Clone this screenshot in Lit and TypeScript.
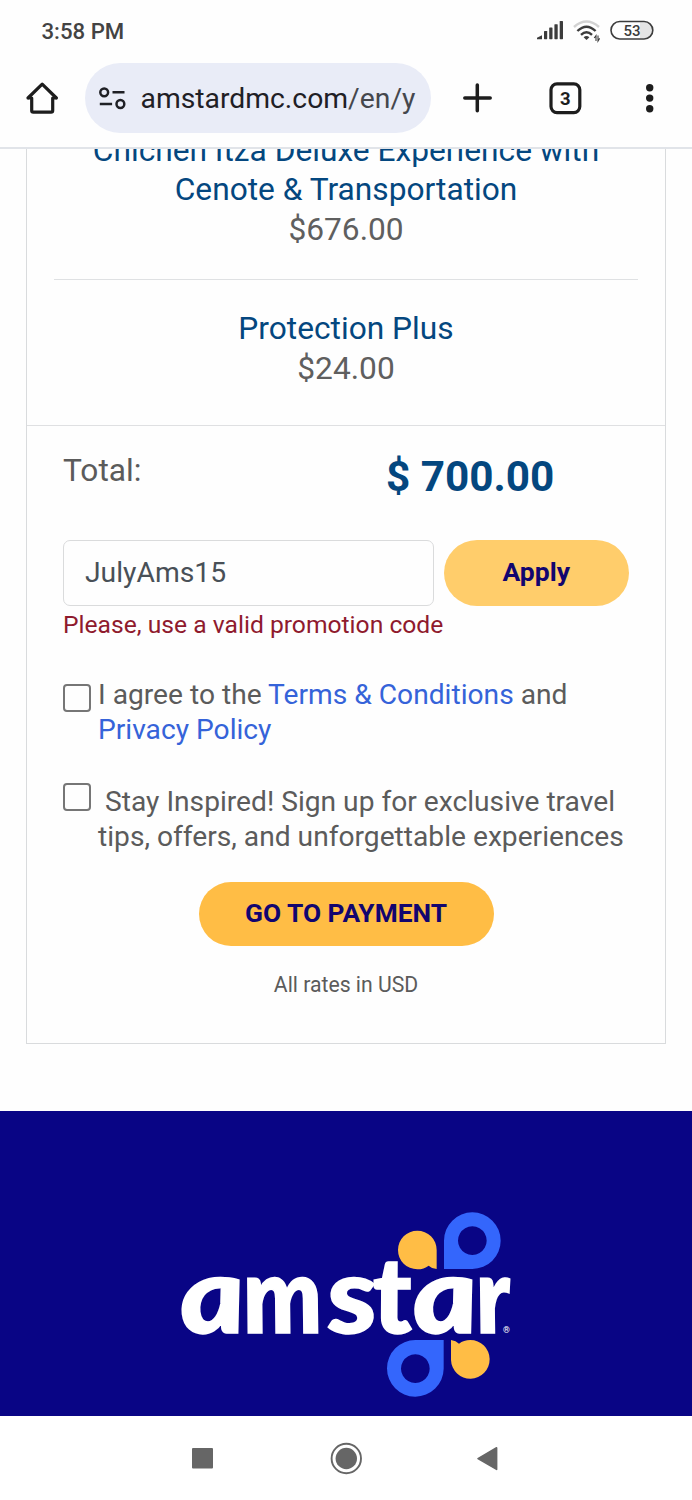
import { LitElement, html, css } from "lit";
import { customElement } from "lit/decorators.js";

@customElement("status-bar")
class StatusBar extends LitElement {
  static styles = css`
    :host { display: flex; align-items: center; height: 62px; padding: 0 38px 0 41.5px; box-sizing: border-box; justify-content: space-between; }
    .time { font-size: 22.2px; font-weight: 500; color: #434343; line-height: 26px; padding-top: 1px; }
    .icons { display: block; }
    .level { font: 500 15px Roboto, sans-serif; fill: #3c3c3c; }
  `;
  render() {
    return html`
      <span class="time">3:58 PM</span>
      <svg class="icons" width="118" height="24" viewBox="536 19 118 24">
        <g fill="#3c3c3c">
          <path d="M537 39.200V37.800L542 35.200V39.200Z" />
          <rect x="544" y="31" width="3.200" height="8.200" rx="0.600" />
          <rect x="549.200" y="27.500" width="3.300" height="11.700" rx="0.600" />
          <rect x="554.400" y="24.200" width="3.300" height="15" rx="0.600" />
          <rect x="559.700" y="21" width="3.300" height="18.200" rx="0.600" />
        </g>
        <g fill="none" stroke-width="2.400">
          <path stroke="#d2d2d2" d="M574 27Q586.500 16.200 599 27" />
          <path stroke="#3c3c3c" d="M577.400 31Q586.500 22.400 595.600 31" />
          <path stroke="#3c3c3c" d="M581 34.800Q586.500 29.600 592 34.800" />
        </g>
        <path fill="#3c3c3c" d="M583.600 37.200Q586.500 34.800 589.400 37.200L586.500 40Z" />
        <path fill="none" stroke="#3c3c3c" stroke-width="1.100" d="M596 41V35.600L594.200 38M598 35.600V41L599.600 38.400" />
        <path fill="#e4e4e4" d="M640 22.500h5a7.800 7.800 0 0 1 0 15.600h-5z" />
        <rect x="611" y="21.500" width="41.800" height="17.500" rx="8.750" fill="none" stroke="#3c3c3c" stroke-width="1.600" />
        <text class="level" x="632" y="35.700" text-anchor="middle">53</text>
      </svg>
    `;
  }
}

@customElement("browser-bar")
class BrowserBar extends LitElement {
  static styles = css`
    :host { display: flex; align-items: center; height: 87.500px; box-sizing: border-box; border-bottom: 2px solid #e1e4e9; padding: 2px 0 15px 25px; }
    .home { margin-right: 25.500px; }
    .url { display: flex; align-items: center; box-sizing: border-box; width: 346.500px; height: 70px; border-radius: 35px; background: #e9ecf7; padding-left: 14px; color: #1f2025; font-size: 28.300px; white-space: nowrap; }
    .url svg { margin-right: 14px; }
    .path { color: #45474d; }
    .actions { display: block; margin-left: 31px; }
    .tabs { font: 700 18.500px Roboto, sans-serif; fill: #1d1d1d; }
  `;
  render() {
    return html`
      <svg class="home" width="34" height="36" viewBox="25 80 34 36">
        <path d="M31.700 98V110.600Q31.700 112.200 33.300 112.200H51.100Q52.700 112.200 52.700 110.600V98M28 98H31.700M56.400 98H52.700M28 98L42.200 84.200L56.400 98" fill="none" stroke="#1d1d1d" stroke-width="3.200" stroke-linejoin="round" stroke-linecap="round" />
      </svg>
      <div class="url">
        <svg width="28" height="24" viewBox="99.500 86 28 24">
          <g fill="none" stroke="#1f2025" stroke-width="2.500">
            <circle cx="104.700" cy="92.300" r="3.900" />
            <circle cx="120.900" cy="104" r="3.900" />
            <path d="M113 92.300H125M100.300 104H112.600" />
          </g>
        </svg>
        <span>amstardmc.com<span class="path">/en/y</span></span>
      </div>
      <svg class="actions" width="200" height="40" viewBox="462 78 200 40">
        <path d="M477.300 85V110.800M464.800 98H490.200" fill="none" stroke="#1d1d1d" stroke-width="3.500" stroke-linecap="round" />
        <rect x="551" y="83.800" width="28.800" height="28.800" rx="6" fill="none" stroke="#1d1d1d" stroke-width="3.200" />
        <text class="tabs" x="565.400" y="105" text-anchor="middle">3</text>
        <g fill="#1d1d1d">
          <circle cx="649.700" cy="87.700" r="3.700" />
          <circle cx="649.700" cy="98.100" r="3.700" />
          <circle cx="649.700" cy="108.700" r="3.700" />
        </g>
      </svg>
    `;
  }
}

@customElement("cart-item")
class CartItem extends LitElement {
  static properties = { price: {} };
  declare price: string;
  static styles = css`
    :host { display: block; text-align: center; font-size: 31.700px; line-height: 39.500px; }
    .name { color: #04477f; }
    .price { color: #5f5f5f; }
  `;
  render() {
    return html`<div class="name"><slot></slot></div><div class="price">${this.price}</div>`;
  }
}

@customElement("order-summary")
class OrderSummary extends LitElement {
  static styles = css`
    :host { display: block; box-sizing: border-box; width: 640px; height: 935px; margin: -40.500px 0 0 26px; border: 1px solid #d9dbdd; color: #5b5b5b; }
    .items { padding: 21px 27px 0; height: 316px; box-sizing: border-box; border-bottom: 1.500px solid #dfe0e2; }
    .rule { height: 1px; background: #dfe1e3; margin: 29.500px 0 29.200px; }
    .body { padding: 0 36px; }
    .total { display: flex; height: 114.500px; }
    .label { font-size: 31.700px; line-height: 40px; padding-top: 25px; width: 323px; }
    .amount { font-size: 42.300px; font-weight: 700; color: #04477f; line-height: 50px; padding-top: 26px; }
    .promo { display: flex; gap: 9.500px; height: 66px; }
    .code { box-sizing: border-box; width: 372px; border: 1.500px solid #dadbdc; border-radius: 7px; padding-left: 21px; font-size: 28.300px; line-height: 64.500px; color: #495057; }
    .apply, .pay { font-family: inherit; border: 0; padding: 0; color: #12056f; font-weight: 700; }
    .apply { width: 186px; border-radius: 33px; background: #ffcd6b; font-size: 26.500px; padding-bottom: 3px; }
    .error { font-size: 24.650px; line-height: 30px; padding-top: 3.500px; color: #8f1a2d; }
    .check { display: flex; font-size: 28.180px; line-height: 35.200px; white-space: nowrap; }
    .agree { padding-top: 37px; }
    .news { padding-top: 36.500px; }
    .box { box-sizing: border-box; width: 28px; height: 28px; border: 2px solid #767676; border-radius: 4px; margin: -1px 7px 0 0; flex: none; }
    .agree .box { margin-top: 7px; }
    .link { color: #3563d9; }
    .actions { display: flex; flex-direction: column; align-items: center; padding-top: 28px; }
    .pay { width: 295px; height: 64px; border-radius: 32px; background: #ffbd45; font-size: 26.300px; padding-bottom: 2px; }
    .rates { font-size: 21.200px; line-height: 26px; padding-top: 26px; }
    .indent { padding-left: 7px; }
  `;
  render() {
    return html`
      <div class="items">
        <cart-item price="$676.00">Chichen Itza Deluxe Experience with<br />Cenote &amp; Transportation</cart-item>
        <div class="rule"></div>
        <cart-item price="$24.00">Protection Plus</cart-item>
      </div>
      <div class="body">
        <div class="total"><span class="label">Total:</span><span class="amount">$ 700.00</span></div>
        <div class="promo">
          <div class="code">JulyAms15</div>
          <button class="apply">Apply</button>
        </div>
        <div class="error">Please, use a valid promotion code</div>
        <div class="check agree">
          <span class="box"></span>
          <span>I agree to the <span class="link">Terms &amp; Conditions</span> and<br /><span class="link">Privacy Policy</span></span>
        </div>
        <div class="check news">
          <span class="box"></span>
          <span><span class="indent">Stay Inspired! Sign up for exclusive travel</span><br />tips, offers, and unforgettable experiences</span>
        </div>
        <div class="actions">
          <button class="pay">GO TO PAYMENT</button>
          <span class="rates">All rates in USD</span>
        </div>
      </div>
    `;
  }
}

@customElement("site-footer")
class SiteFooter extends LitElement {
  static styles = css`
    :host { display: block; box-sizing: border-box; height: 305px; padding: 99px 0 0 180px; background: #090585; }
    .logo { display: block; overflow: visible; }
    .word { font: italic 900 318px Lato, sans-serif; fill: #fff; stroke: #fff; stroke-width: 5px; }
    .mark { font: 500 26px Roboto, sans-serif; fill: #fff; }
  `;
  render() {
    return html`
      <svg class="logo" width="334" height="190" viewBox="60 60 1002 570">
        <path fill="#3466fc" fill-rule="evenodd" d="M852 237V152A85 85 0 1 1 937 237ZM937 109a43 43 0 1 0 0.010 0Z" />
        <path fill="#3466fc" fill-rule="evenodd" d="M851 450V536A85 85 0 1 1 766 450ZM766 493a43 43 0 1 0 0.010 0Z" />
        <path fill="#ffbd45" d="M830 237V180A58 58 0 1 0 772 238Q792 238 806 227Q815 236 830 237Z" />
        <path fill="#ffbd45" d="M873 450V510A58 58 0 1 0 931 450Q911 450 897 461Q888 452 873 450Z" />
        <g transform="translate(0 428) skewX(7)">
          <text class="word"><tspan x="70" textLength="196" lengthAdjust="spacingAndGlyphs">a</tspan><tspan x="260" textLength="238" lengthAdjust="spacingAndGlyphs">m</tspan><tspan x="512" textLength="150" lengthAdjust="spacingAndGlyphs">s</tspan><tspan x="650" textLength="122" lengthAdjust="spacingAndGlyphs">t</tspan><tspan x="768" textLength="196" lengthAdjust="spacingAndGlyphs">a</tspan><tspan x="959" textLength="104" lengthAdjust="spacingAndGlyphs">r</tspan></text>
        </g>
        <text class="mark" x="1029" y="430">®</text>
      </svg>
    `;
  }
}

@customElement("nav-bar")
class NavBar extends LitElement {
  static styles = css`
    :host { display: flex; justify-content: center; align-items: center; height: 84px; box-sizing: border-box; padding-top: 2px; background: #fff; }
  `;
  render() {
    return html`
      <svg width="312" height="36" viewBox="190 1441 312 36" fill="#666">
        <rect x="192" y="1448" width="21" height="20.500" rx="1" />
        <circle cx="346.300" cy="1458.500" r="10.700" />
        <circle cx="346.300" cy="1458.500" r="14.700" fill="none" stroke="#666" stroke-width="1.900" />
        <path d="M478 1458.600L496.600 1447.800V1469.400Z" stroke="#666" stroke-width="1.600" stroke-linejoin="round" />
      </svg>
    `;
  }
}

@customElement("app-root")
class AppRoot extends LitElement {
  static styles = css`
    :host { display: flex; flex-direction: column; width: 692px; height: 1500px; overflow: hidden; background: #fefefe; font-family: Roboto, sans-serif; }
    .page { display: flex; flex-direction: column; justify-content: space-between; height: 1267px; overflow: hidden; }
  `;
  render() {
    return html`
      <status-bar></status-bar>
      <browser-bar></browser-bar>
      <main class="page">
        <order-summary></order-summary>
        <site-footer></site-footer>
      </main>
      <nav-bar></nav-bar>
    `;
  }
}
